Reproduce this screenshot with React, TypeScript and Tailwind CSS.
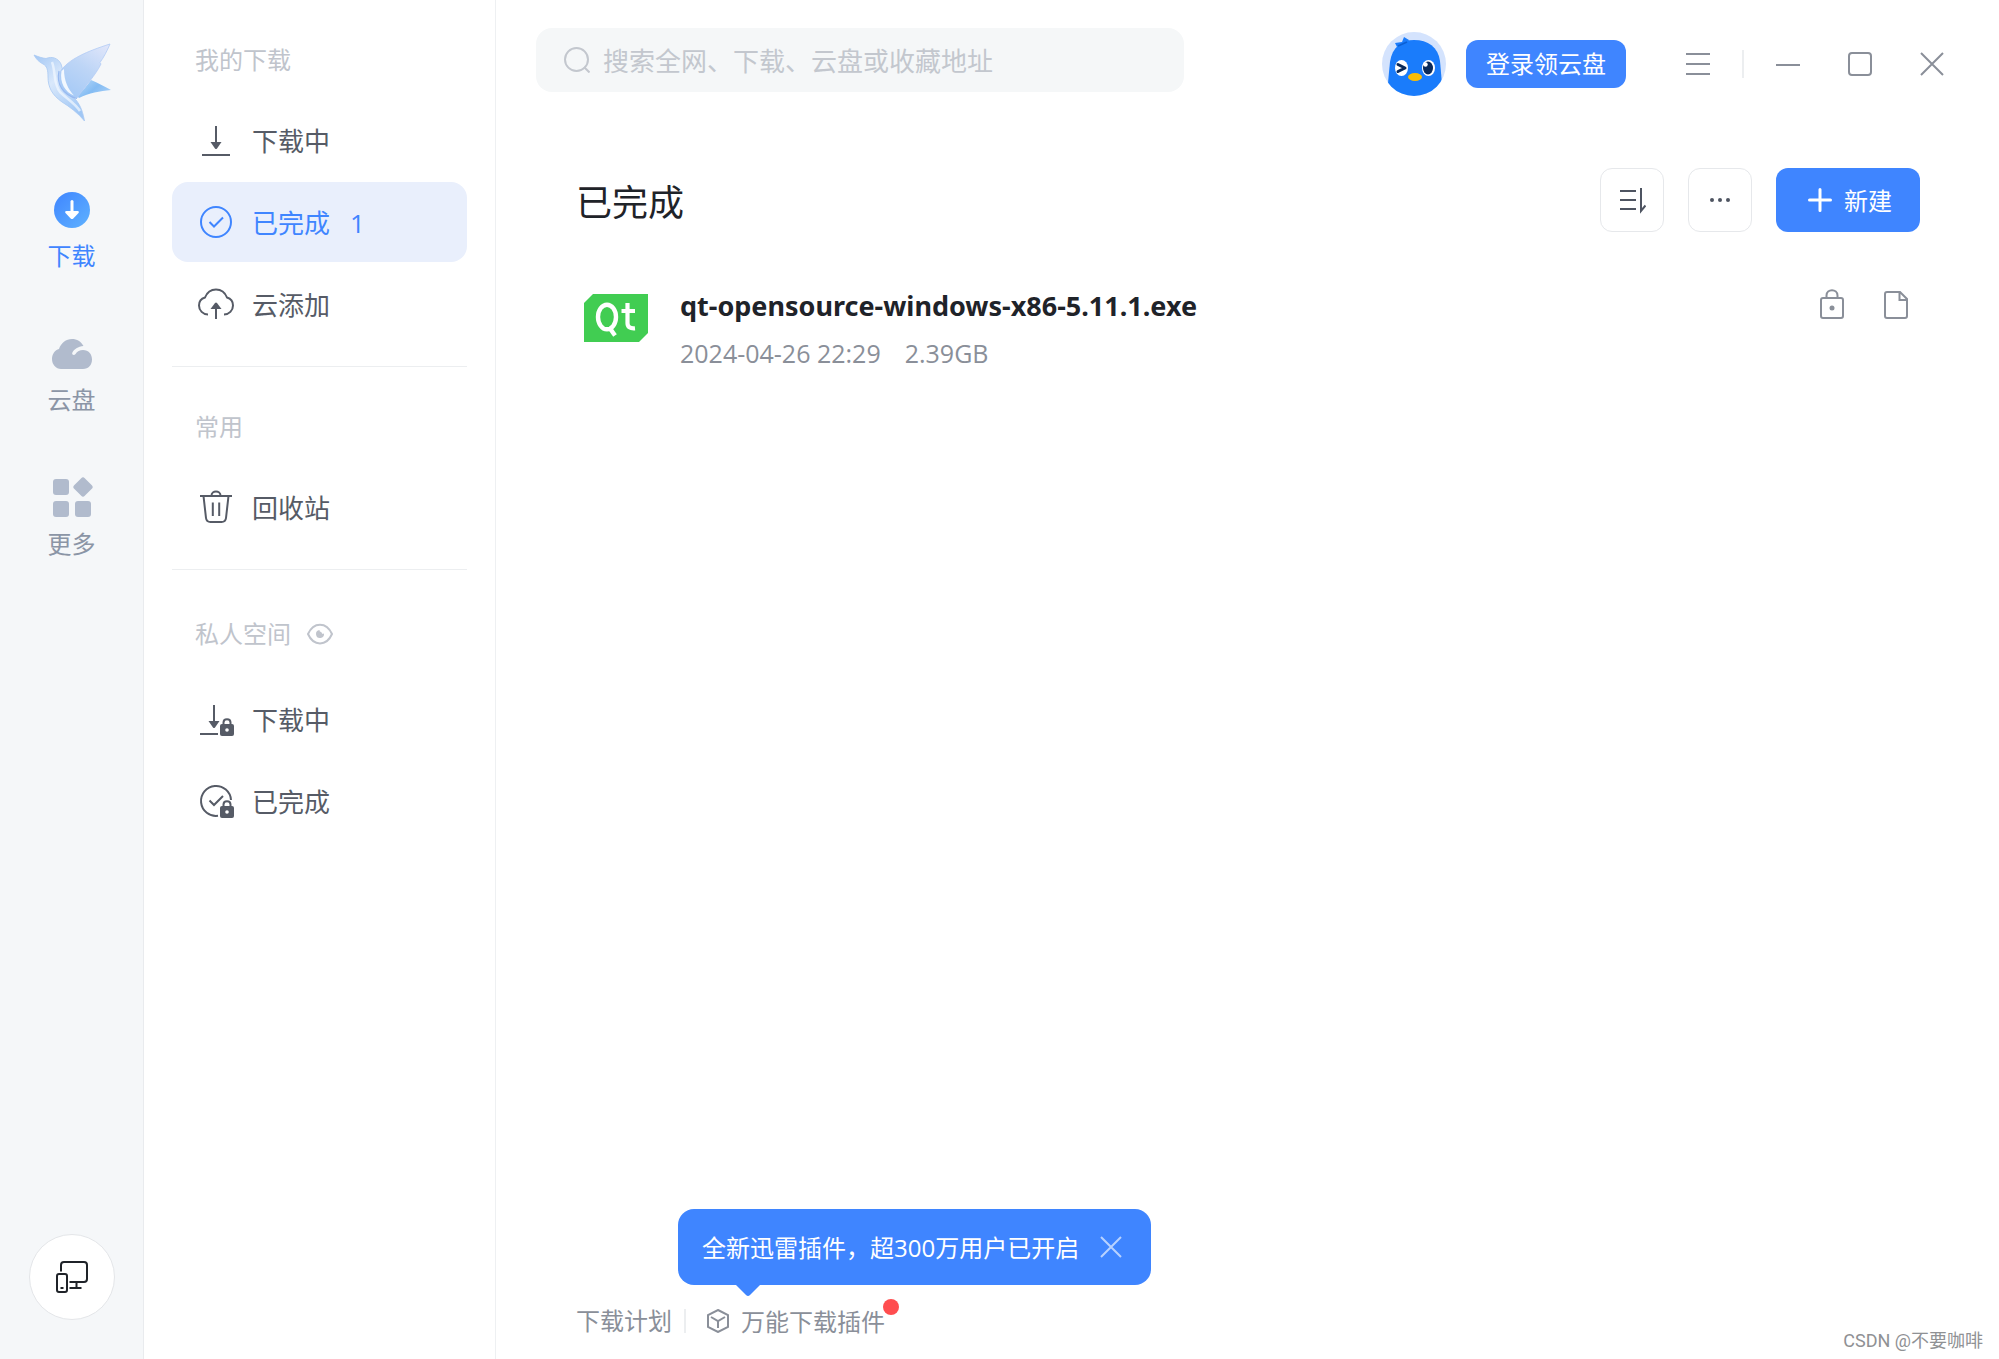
import React from "react";

type IconProps = { className?: string };

function BirdLogo() {
  return (
    <svg viewBox="0 0 80 80" className="ml-0.5 h-20 w-20" aria-label="迅雷" role="img">
      <defs>
        <linearGradient id="wing" x1="0.9" y1="0" x2="0.3" y2="1">
          <stop offset="0" stopColor="#e0e6fa" />
          <stop offset="0.5" stopColor="#bdd5f6" />
          <stop offset="1" stopColor="#a6caf6" />
        </linearGradient>
        <linearGradient id="body" x1="0" y1="0" x2="0.7" y2="1">
          <stop offset="0" stopColor="#a3c7f4" />
          <stop offset="0.45" stopColor="#d9e8fb" />
          <stop offset="1" stopColor="#a0c7f5" />
        </linearGradient>
        <linearGradient id="tail" x1="0" y1="0.2" x2="1" y2="0.8">
          <stop offset="0" stopColor="#b5d7f8" />
          <stop offset="0.5" stopColor="#84bcf3" />
          <stop offset="1" stopColor="#a8d0f8" />
        </linearGradient>
      </defs>
      <path d="M1 12C6 14 9 15 13 15.500C19 13 25 15 28 21L30 28C28 38 32 47 38 52L43 57C48 63 50 70 51.500 78C45 70 37 64 29 59C19 52 15 44 15 34C15 27 14 23 10 21C6 19 3 16 1 12Z" fill="url(#body)" stroke="#a9c9f3" strokeWidth="0.800" />
      <path d="M19 19C23 30 20 40 27 49C34 56 42 60 47 68" fill="none" stroke="#f2f8ff" strokeWidth="2.500" opacity="0.700" />
      <path d="M58 37C65 40 71 43 78 47C67 48 56 50 46 55L44 53C49 48 54 43 58 37Z" fill="url(#tail)" />
      <path d="M77 1C74 8 71 14 67 19.500L68 21C62 33 53 42 44 55C32 53 24 43 27 29C35 16 55 8 77 1Z" fill="url(#wing)" stroke="#b3ccf5" strokeWidth="0.800" />
      <path d="M28.500 28C26.500 40 32 49 41 52.500C35 46 31 38 31 26Z" fill="#fff" opacity="0.850" />
      <path d="M26 28C23 41 30 52 44 55.500" fill="none" stroke="#97b9f0" strokeWidth="1.200" />
    </svg>
  );
}

function DownloadBadge() {
  return (
    <svg viewBox="0 0 42 42" className="h-[42px] w-[42px]">
      <defs>
        <linearGradient id="dl" x1="0" y1="0" x2="1" y2="1">
          <stop offset="0" stopColor="#3f85ff" />
          <stop offset="1" stopColor="#5fb2ff" />
        </linearGradient>
      </defs>
      <circle cx="21" cy="21" r="18" fill="url(#dl)" />
      <path d="M21 12.500V23" stroke="#fff" strokeWidth="3" strokeLinecap="round" />
      <path d="M15.500 22H26.500C28 22 28.300 23 27.500 24L22.300 29.500Q21 30.600 19.700 29.500L14.500 24C13.700 23 14 22 15.500 22Z" fill="#fff" />
    </svg>
  );
}

function CloudBadge() {
  return (
    <svg viewBox="0 0 42 42" className="h-[42px] w-[42px]">
      <path d="M10 36C5 36 1 31.500 1 26C1 21 4 17 8 16C10 10 15 6 21 6C26 6 30 8.500 32.500 13C27 13.500 23 16 21.200 20C20.800 22 23.300 22.800 24.500 21C26 18.500 29 17 32 17C37.500 17 41 21 41 26.500C41 32 37.500 36 32 36Z" fill="#b1bbcd" />
    </svg>
  );
}

function MoreBadge() {
  return (
    <svg viewBox="0 0 42 42" className="h-[42px] w-[42px]" fill="#b1bbcd">
      <rect x="2" y="2" width="16" height="16" rx="3" />
      <rect x="2" y="24" width="16" height="16" rx="3" />
      <rect x="24" y="24" width="16" height="16" rx="3" />
      <rect x="24.500" y="2.500" width="15" height="15" rx="2.500" transform="rotate(45 32 10)" />
    </svg>
  );
}

function DownloadIcon() {
  return (
    <svg viewBox="0 0 36 36" className="h-9 w-9" fill="none" stroke="currentColor" strokeWidth="2">
      <path d="M18 4V22M4 33H32" />
      <path d="M12.500 20H23.500L19 26.500Q18 27.500 17 26.500Z" fill="currentColor" stroke="none" />
    </svg>
  );
}

function CheckIcon() {
  return (
    <svg viewBox="0 0 36 36" className="h-9 w-9" fill="none" stroke="currentColor" strokeWidth="2">
      <circle cx="18" cy="18" r="15" />
      <path d="M11.500 18L16 22.500L25 13.500" />
    </svg>
  );
}

function CloudUpIcon() {
  return (
    <svg viewBox="0 0 36 36" className="h-9 w-9" fill="none" stroke="currentColor" strokeWidth="2">
      <path d="M10 28.500C5 28.500 1 24.500 1 19.500C1 15.500 3.500 12.500 7 11.500C9 6.500 13 3.500 18 3.500C23 3.500 27 6.500 29 11.500C32.500 12.500 35 15.500 35 19.500C35 24.500 31 28.500 26 28.500" />
      <path d="M18 21V33" />
      <path d="M12.500 23L17 17Q18 16 19 17L23.500 23Z" fill="currentColor" stroke="none" />
    </svg>
  );
}

function TrashIcon() {
  return (
    <svg viewBox="0 0 36 36" className="h-9 w-9" fill="none" stroke="currentColor" strokeWidth="2">
      <path d="M2 7H34M13.500 7V6.500C13.500 1.200 22.500 1.200 22.500 6.500V7M5.500 7L8 29Q8.500 33 12.500 33H23.500Q27.500 33 28 29L30.500 7M14.800 13.500V27M21.200 13.500V27" />
    </svg>
  );
}

function SmallLock() {
  return (
    <g stroke="none">
      <rect x="22" y="23" width="14" height="12" rx="2" fill="currentColor" />
      <path d="M25.500 24V21.500C25.500 17 32.500 17 32.500 21.500V24" fill="none" stroke="currentColor" strokeWidth="2" />
      <circle cx="29" cy="29" r="1.800" fill="#fff" />
    </g>
  );
}

function DownloadLockIcon() {
  return (
    <svg viewBox="0 0 36 36" className="h-9 w-9" fill="none" stroke="currentColor" strokeWidth="2">
      <path d="M16 4V22M2 33H20" />
      <path d="M10.500 20H21.500L17 26.500Q16 27.500 15 26.500Z" fill="currentColor" stroke="none" />
      <SmallLock />
    </svg>
  );
}

function CheckLockIcon() {
  return (
    <svg viewBox="0 0 36 36" className="h-9 w-9" fill="none" stroke="currentColor" strokeWidth="2">
      <path d="M20 32.800A15 15 0 1 1 33 17" />
      <path d="M11.500 17.500L16 22L25 13" />
      <SmallLock />
    </svg>
  );
}

function EyeIcon() {
  return (
    <svg viewBox="0 0 26 22" className="h-[22px] w-[26px]" fill="none" stroke="currentColor" strokeWidth="2">
      <path d="M1 11C6.500 -1.500 19.500 -1.500 25 11C19.500 23.500 6.500 23.500 1 11Z" />
      <path d="M12.500 7A4 4 0 1 0 17 10.500Q13 12 12.500 7Z" fill="currentColor" stroke="none" />
      <circle cx="12.500" cy="11" r="2.500" fill="currentColor" stroke="none" />
    </svg>
  );
}

function DevicesIcon() {
  return (
    <svg viewBox="0 0 36 36" className="h-9 w-9" fill="none" stroke="currentColor" strokeWidth="2">
      <path d="M7 12.500V6Q7 3 10 3H30Q33 3 33 6V20Q33 23 30 23H15.500M22.500 23V29M15.500 29H27.500" />
      <rect x="3" y="15" width="10" height="18" rx="2" />
      <path d="M6.500 29H9.500" />
    </svg>
  );
}

function SearchIcon() {
  return (
    <svg viewBox="0 0 26 26" className="h-[26px] w-[26px] shrink-0" fill="none" stroke="currentColor" strokeWidth="2">
      <circle cx="12.500" cy="12.500" r="11.500" />
      <path d="M20 20L25.500 25.500" />
    </svg>
  );
}

function Avatar() {
  return (
    <svg viewBox="0 0 64 64" className="h-16 w-16" role="img" aria-label="头像">
      <clipPath id="face">
        <circle cx="32" cy="32" r="32" />
      </clipPath>
      <g clipPath="url(#face)">
        <rect width="64" height="64" fill="#d4e3fd" />
        <path d="M5 64C6 50 7 40 8 30C10 15 20 8 32 8C46 8 56 15 58 29C59 40 60 52 61 64Z" fill="#1a7cfb" />
        <path d="M13 11L20 10L22 5L27 8L25 12L15 15Z" fill="#1a7cfb" />
        <path d="M16 14L25 10" stroke="#0b5fd4" strokeWidth="1.500" />
        <ellipse cx="19.500" cy="36" rx="6.500" ry="8" fill="#fff" />
        <ellipse cx="46.500" cy="36" rx="6.500" ry="8" fill="#fff" />
        <path d="M16 32.500L23 36L16 39.500" fill="none" stroke="#0a2a5a" strokeWidth="3" strokeLinejoin="round" strokeLinecap="round" />
        <ellipse cx="46" cy="36" rx="5" ry="6.500" fill="#0a2a5a" />
        <circle cx="43.500" cy="32.500" r="2.200" fill="#fff" />
        <ellipse cx="33" cy="45" rx="7" ry="4" fill="#fbbc04" />
      </g>
    </svg>
  );
}

function QtIcon() {
  return (
    <svg viewBox="0 0 64 48" className="h-12 w-16 shrink-0" role="img" aria-label="Qt">
      <path d="M9 0H64V39L55 48H0V9Z" fill="#41cd52" />
      <ellipse cx="23" cy="23" rx="9" ry="12.300" fill="none" stroke="#fff" strokeWidth="4.400" />
      <path d="M25 33L31 41.500" stroke="#fff" strokeWidth="4.400" />
      <path d="M43.500 9V29Q43.500 35 51 34.300M37.500 17H51" fill="none" stroke="#fff" strokeWidth="4.200" />
    </svg>
  );
}

function Stroke({ d, className = "h-6 w-6" }: IconProps & { d: string }) {
  return (
    <svg viewBox="0 0 24 24" className={className} fill="none" stroke="currentColor" strokeWidth="2">
      <path d={d} />
    </svg>
  );
}

function RailItem({ icon, label, active = false }: { icon: React.ReactNode; label: string; active?: boolean }) {
  return (
    <button className={`flex h-36 w-full flex-col items-center gap-2 text-2xl leading-[34px] ${active ? "text-[#3f85ff]" : "text-[#8b95a6]"}`}>
      {icon}
      <span>{label}</span>
    </button>
  );
}

function NavItem({ icon, label, count, active = false }: { icon: React.ReactNode; label: string; count?: number; active?: boolean }) {
  return (
    <a
      href="#"
      className={`flex h-20 items-center rounded-2xl pl-[26px] text-[26px] ${active ? "bg-[#e9effc] text-[#3f85ff]" : "text-[#565b66]"}`}
    >
      {icon}
      <span className="ml-[18px] pt-0.5">{label}</span>
      {count !== undefined && <span className="ml-5 pt-0.5">{count}</span>}
    </a>
  );
}

function NavTitle({ children }: { children: React.ReactNode }) {
  return <h2 className="flex h-9 items-center gap-4 pl-[23px] text-2xl text-[#c0c4cc]">{children}</h2>;
}

export default function App() {
  return (
    <div className="flex min-h-screen bg-white font-['Open_Sans','Noto_Sans_CJK_SC',sans-serif] text-[#1f2329]">
      <aside className="flex w-36 shrink-0 flex-col items-center border-r border-[#e9ebee] bg-[#f5f7f9] pt-[43px] pb-[39px]">
        <BirdLogo />
        <nav className="mt-[66px] w-full">
          <RailItem active icon={<DownloadBadge />} label="下载" />
          <RailItem icon={<CloudBadge />} label="云盘" />
          <RailItem icon={<MoreBadge />} label="更多" />
        </nav>
        <button aria-label="设备" className="mt-auto ml-px flex h-[86px] w-[86px] items-center justify-center rounded-full border border-[#e4e6e9] bg-white">
          <DevicesIcon />
        </button>
      </aside>

      <aside className="w-[352px] shrink-0 border-r border-[#eef0f2] px-7 pt-[42px]">
        <NavTitle>我的下载</NavTitle>
        <nav className="mt-[22px] flex flex-col gap-0.5">
          <NavItem icon={<DownloadIcon />} label="下载中" />
          <NavItem active icon={<CheckIcon />} label="已完成" count={1} />
          <NavItem icon={<CloudUpIcon />} label="云添加" />
        </nav>
        <hr className="mt-[22px] mb-[42px] border-[#eceef0]" />
        <NavTitle>常用</NavTitle>
        <nav className="mt-[22px]">
          <NavItem icon={<TrashIcon />} label="回收站" />
        </nav>
        <hr className="mt-[22px] mb-[46px] border-[#eceef0]" />
        <NavTitle>
          私人空间
          <EyeIcon />
        </NavTitle>
        <nav className="mt-[27px] flex flex-col gap-0.5">
          <NavItem icon={<DownloadLockIcon />} label="下载中" />
          <NavItem icon={<CheckLockIcon />} label="已完成" />
        </nav>
      </aside>

      <div className="flex min-w-0 flex-1 flex-col">
        <header className="flex items-start pt-7 pl-10 pr-[55px]">
          <label className="flex h-16 w-[648px] items-center gap-[13px] rounded-2xl bg-[#f5f7f8] pl-7 text-[#c3c7ce]">
            <SearchIcon />
            <input
              type="text"
              aria-label="搜索"
              placeholder="搜索全网、下载、云盘或收藏地址"
              className="min-w-0 flex-1 bg-transparent pt-0.5 text-[26px] outline-none placeholder:text-[#c3c7ce]"
            />
          </label>
          <div className="mt-1 ml-auto flex h-16 items-center text-[#8a8f99]">
            <Avatar />
            <button className="ml-5 h-12 w-40 rounded-xl bg-[#3f85ff] text-2xl text-white">登录领云盘</button>
            <button aria-label="菜单" className="ml-[60px]"><Stroke d="M0 2H24M0 12H24M0 22H24" /></button>
            <span className="mx-8 h-7 w-0.5 bg-[#eceef0]" />
            <button aria-label="最小化"><Stroke d="M0 13H24" /></button>
            <button aria-label="最大化" className="ml-12"><Stroke d="M4 1H20Q23 1 23 4V20Q23 23 20 23H4Q1 23 1 20V4Q1 1 4 1Z" /></button>
            <button aria-label="关闭" className="ml-12"><Stroke d="M1 1L23 23M23 1L1 23" /></button>
          </div>
        </header>

        <main className="flex-1 pr-[79px] pl-20">
          <div className="mt-[72px] flex items-center gap-6">
            <h1 className="mr-auto pt-1.5 text-4xl">已完成</h1>
            <button aria-label="排序" className="flex h-16 w-16 items-center justify-center rounded-xl border border-[#e6e8eb] text-[#4e5461]">
              <svg viewBox="0 0 28 28" className="h-7 w-7" fill="none" stroke="currentColor" strokeWidth="2">
                <path d="M2 5H18M2 14H18M2 23H18M23 2V25L27.500 19.500" />
              </svg>
            </button>
            <button aria-label="更多操作" className="flex h-16 w-16 items-center justify-center rounded-xl border border-[#e6e8eb] text-[#4e5461]">
              <svg viewBox="0 0 24 24" className="h-6 w-6" fill="currentColor">
                <circle cx="4" cy="12" r="2" />
                <circle cx="12" cy="12" r="2" />
                <circle cx="20" cy="12" r="2" />
              </svg>
            </button>
            <button className="flex h-16 w-36 items-center justify-center gap-3 rounded-xl bg-[#3f85ff] pl-1 text-2xl text-white">
              <svg viewBox="0 0 24 24" className="h-6 w-6" stroke="currentColor" strokeWidth="3" strokeLinecap="round">
                <path d="M12 1.500V22.500M1.500 12H22.500" />
              </svg>
              <span className="pt-0.5">新建</span>
            </button>
          </div>

          <ul className="mt-[52px]">
            <li className="flex items-start pl-2">
              <div className="pt-2.5"><QtIcon /></div>
              <div className="ml-8">
                <p className="font-['Noto_Sans',sans-serif] text-[27px] leading-[44px] font-bold">qt-opensource-windows-x86-5.11.1.exe</p>
                <p className="mt-[3px] flex gap-6 text-[25px] leading-[44px] text-[#8a8f99]">
                  <span>2024-04-26 22:29</span>
                  <span>2.39GB</span>
                </p>
              </div>
              <div className="ml-auto flex gap-8 pt-1 pr-2 text-[#8a8f99]">
                <button aria-label="移入私人空间">
                  <svg viewBox="0 0 32 32" className="h-8 w-8" fill="none" stroke="currentColor" strokeWidth="2">
                    <rect x="5" y="10" width="22" height="20" rx="2" />
                    <path d="M10.500 10V7.500C10.500 0.500 21.500 0.500 21.500 7.500V10" />
                    <circle cx="16" cy="20" r="2.500" fill="currentColor" stroke="none" />
                  </svg>
                </button>
                <button aria-label="打开文件">
                  <svg viewBox="0 0 32 32" className="h-8 w-8" fill="none" stroke="currentColor" strokeWidth="2">
                    <path d="M7 4H20L27 11V28Q27 30 25 30H7Q5 30 5 28V6Q5 4 7 4ZM19.500 4V12H27" />
                  </svg>
                </button>
              </div>
            </li>
          </ul>
        </main>

        <footer className="flex items-center pb-3.5 pl-20 text-2xl text-[#8a8f99]">
          <button>下载计划</button>
          <span className="mx-3 h-6 w-0.5 bg-[#eceef0]" />
          <div className="relative ml-2">
            <button className="flex items-center gap-[11px]">
              <Stroke d="M12 1L22 6V18L12 23L2 18V6ZM5 8L12 12L19 8M12 12V19" />
              <span className="pt-0.5">万能下载插件</span>
            </button>
            <span className="absolute -top-[5px] -right-3.5 h-4 w-4 rounded-full bg-[#ff4d4f]" />
            <div className="absolute bottom-[53px] -left-7 flex h-[76px] items-center gap-5 rounded-2xl bg-[#3f85ff] px-6 whitespace-nowrap text-white">
              <span className="pt-0.5">全新迅雷插件，超300万用户已开启</span>
              <button aria-label="关闭提示" className="mr-1 text-[#b8d2ff]"><Stroke d="M2 2L22 22M22 2L2 22" /></button>
              <svg viewBox="0 0 24 12" className="absolute top-full left-[58px] h-3 w-6" fill="#3f85ff">
                <path d="M0 0H24L14 10Q12 12 10 10Z" />
              </svg>
            </div>
          </div>
          <span className="mt-8 -mb-2 ml-auto pr-4 font-['Roboto','Noto_Sans_CJK_SC',sans-serif] text-lg leading-6 text-[#8f9194]">CSDN @不要咖啡</span>
        </footer>
      </div>
    </div>
  );
}
